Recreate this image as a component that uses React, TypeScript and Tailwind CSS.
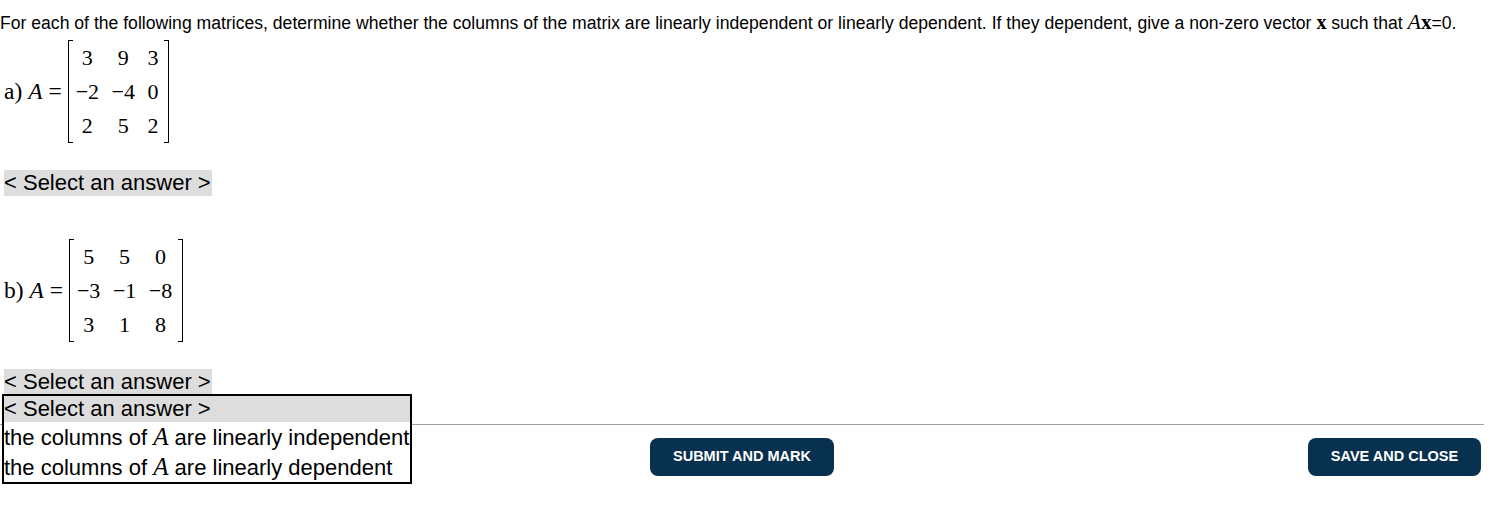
const sans = "font-['Liberation_Sans',Arial,sans-serif]";
const serif = "font-['Liberation_Serif','Times_New_Roman',serif]";

function MathA({ size }: { size: string }) {
  return <span className={`${serif} italic ${size}`}>A</span>;
}

function SelectBox() {
  return (
    <div className="ml-1 flex h-[26px] w-[208px] items-center bg-[#dddddd] text-[22px] leading-[26px] whitespace-nowrap text-black">
      {"< Select an answer >"}
    </div>
  );
}

function Matrix({ label, rows, pad }: { label: string; rows: string[][]; pad: string }) {
  return (
    <div className={`${serif} ml-1 flex h-[103px] items-center text-[22px] text-black`}>
      <span className="pr-[6px] text-[23.5px] whitespace-pre">
        {label} <i>A</i> =
      </span>
      <div className="h-full w-[5px] border-y border-l-[1.5px] border-black" />
      <div className={`grid grid-cols-[auto_auto_auto] gap-x-[12.5px] text-center leading-[34px] ${pad}`}>
        {rows.flat().map((cell, i) => (
          <span key={i}>{cell}</span>
        ))}
      </div>
      <div className="h-full w-[5px] border-y border-r-[1.5px] border-black" />
    </div>
  );
}

export default function App() {
  return (
    <div className={`${sans} relative h-[509px] w-[1492px] overflow-hidden bg-white text-black`}>
      <p className="h-[40px] pt-[11px] text-[17.6px] leading-[22px] whitespace-nowrap">
        For each of the following matrices, determine whether the columns of the matrix are linearly independent or linearly dependent. If they dependent, give a non-zero vector{" "}
        <b className={`${serif} text-[20px]`}>x</b> such that <MathA size="text-[22px]" />
        <b className={`${serif} text-[21px]`}>x</b>=0.
      </p>
      <Matrix
        label="a)"
        pad="pl-[3px] pr-[6px]"
        rows={[
          ["3", "9", "3"],
          ["−2", "−4", "0"],
          ["2", "5", "2"],
        ]}
      />
      <div className="mt-[27px]">
        <SelectBox />
      </div>
      <div className="mt-[43px]">
        <Matrix
          label="b)"
          pad="pl-[3px] pr-[6px]"
          rows={[
            ["5", "5", "0"],
            ["−3", "−1", "−8"],
            ["3", "1", "8"],
          ]}
        />
      </div>
      <div className="mt-[27px]">
        <SelectBox />
      </div>
      <div className="mt-[29px] w-[1484px] border-t border-[#a0a0a0]" />
      <div className="mt-[13px] flex w-[1481px] justify-end gap-[474px]">
        <button className="flex h-[38px] w-[184px] items-center justify-center rounded-[8px] bg-[#08304f] text-[14.5px] font-bold text-white">
          SUBMIT AND MARK
        </button>
        <button className="flex h-[38px] w-[173px] items-center justify-center rounded-[8px] bg-[#08304f] text-[14.5px] font-bold text-white">
          SAVE AND CLOSE
        </button>
      </div>
      <div className="absolute top-[394px] left-[2px] h-[90px] w-[410px] border-2 border-black bg-white text-[22px] leading-[30px]">
        <div className="h-[26px] bg-[#dddddd] leading-[26px]">{"< Select an answer >"}</div>
        <div className="mt-[1px] h-[30px] whitespace-nowrap">
          the columns of <MathA size="text-[25px] leading-none" /> are linearly independent
        </div>
        <div className="h-[30px] whitespace-nowrap">
          the columns of <MathA size="text-[25px] leading-none" /> are linearly dependent
        </div>
      </div>
    </div>
  );
}
